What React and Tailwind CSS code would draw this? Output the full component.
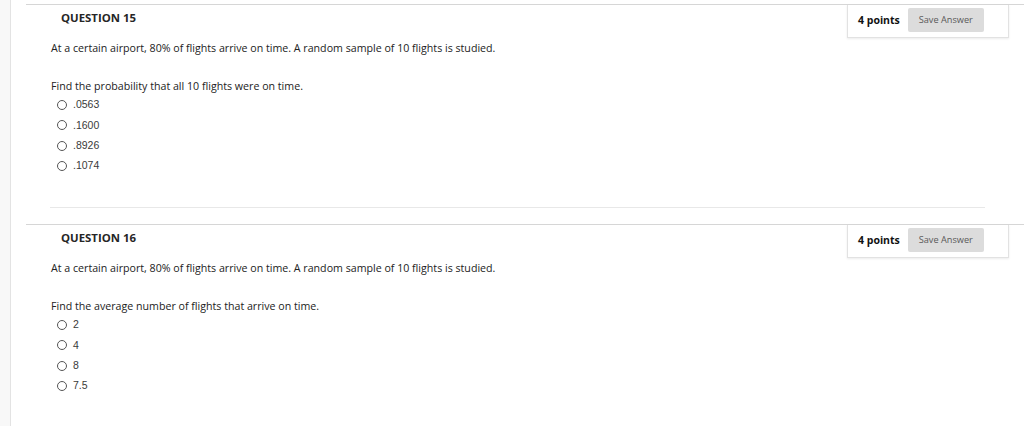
import React from 'react';

const questions = [
  {
    num: 15,
    prompt: 'Find the probability that all 10 flights were on time.',
    options: ['.0563', '.1600', '.8926', '.1074'],
  },
  {
    num: 16,
    prompt: 'Find the average number of flights that arrive on time.',
    options: ['2', '4', '8', '7.5'],
  },
];

const Question = ({ q, last }) => (
  <div className="border-t border-[#d6d6d6] h-[220px] flex flex-col">
    {/* Header row */}
    <div className="flex items-start justify-between h-[33px]">
      <h3 className="pl-[35px] pt-[4px] text-[11.4px] font-bold text-[#262626]">
        QUESTION {q.num}
      </h3>
      <div className="mr-[15px] w-[162px] h-[33px] flex items-start gap-[8px] pl-[10px] pt-[3px] border-l border-b border-r border-[#e2e2e2] shadow-[0_1px_2px_rgba(0,0,0,0.08)]">
        <span className="text-[10.5px] leading-[24px] font-bold text-[#111]">4 points</span>
        <button className="w-[76px] h-[24px] bg-[#dcdcdc] rounded-[2px] text-[9.2px] text-[#5a5a5a]">
          Save Answer
        </button>
      </div>
    </div>

    <p className="pl-[25px] mt-[3px] text-[10.65px] leading-[14px] text-[#222]">
      At a certain airport, 80% of flights arrive on time. A random sample of 10 flights is studied.
    </p>

    <p className="pl-[25px] mt-[24px] text-[10.65px] leading-[14px] text-[#222]">
      {q.prompt}
    </p>

    <div className="flex flex-col mt-[2px] pl-[31px]">
      {q.options.map((opt) => (
        <label key={opt} className="flex items-center h-[20.3px] gap-[6px]">
          <span className="w-[10px] h-[10px] rounded-full border border-[#555] bg-white" />
          <span className="font-['Liberation_Sans',Arial,sans-serif] text-[10.5px] text-[#3a3a3a]">{opt}</span>
        </label>
      ))}
    </div>

    {!last && <div className="mt-auto mb-[16px] ml-[24px] mr-[39px] border-t border-[#e8e8e8]" />}
  </div>
);

export default function App() {
  return (
    <div className="w-[1024px] h-[426px] flex bg-white overflow-hidden font-['Open_Sans',sans-serif]">
      <div className="w-[11px] h-full bg-[#f8f8f8] border-r border-[#e3e3e3]" />
      <div className="flex-1 pl-[15px] pt-[4px]">
        {questions.map((q, i) => (
          <Question key={q.num} q={q} last={i === questions.length - 1} />
        ))}
      </div>
    </div>
  );
}
